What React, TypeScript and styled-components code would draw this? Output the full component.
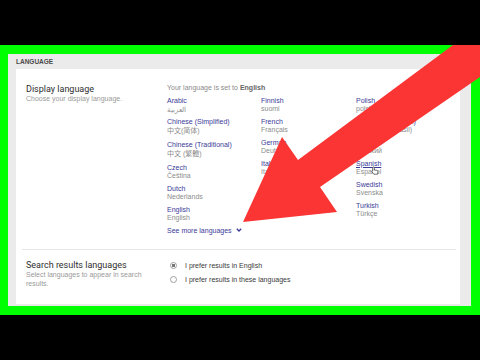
import React from "react";
import styled, { createGlobalStyle } from "styled-components";

const Global = createGlobalStyle`
  html, body { margin: 0; padding: 0; background: #000; }
  body { font-family: "Liberation Sans", Arial, "Noto Sans CJK SC", sans-serif; }
  * { box-sizing: border-box; }
`;

const Page = styled.div`
  position: relative;
  width: 480px;
  height: 360px;
  background: #000;
  overflow: hidden;
  display: flex;
  flex-direction: column;
`;

const Band = styled.div<{ $h: number }>`
  height: ${(p) => p.$h}px;
  flex: none;
  background: #000;
  position: relative;
  z-index: 2;
`;

const Frame = styled.div`
  height: 270px;
  flex: none;
  background: #00ff00;
  padding: 9px 9px 9px 8px;
`;

const Panel = styled.div`
  height: 100%;
  background: #ebebeb;
  padding: 0 11px 2px 8px;
  display: flex;
  flex-direction: column;
`;

const PanelHeader = styled.div`
  height: 15px;
  flex: none;
  display: flex;
  align-items: center;
  font-size: 6.5px;
  font-weight: 700;
  color: #4a4a4a;
  text-transform: uppercase;
`;

const Card = styled.div`
  flex: 1;
  background: #fff;
  display: flex;
  flex-direction: column;
`;

const Section = styled.div<{ $pt: number; $pb: number }>`
  display: grid;
  grid-template-columns: 141px 1fr;
  padding: ${(p) => p.$pt}px 0 ${(p) => p.$pb}px 10px;
`;

const Title = styled.div<{ $lh: number }>`
  font-family: Roboto, "Liberation Sans", sans-serif;
  font-size: 9px;
  line-height: ${(p) => p.$lh}px;
  color: #2e2e2e;
`;

const Desc = styled.div<{ $mt: number }>`
  font-size: 7px;
  line-height: 8.75px;
  color: #9a9a9a;
  max-width: 122px;
  margin-top: ${(p) => p.$mt}px;
`;

const Intro = styled.div`
  font-size: 7px;
  line-height: 10px;
  color: #8a8a8a;
  margin-bottom: 2.5px;
  b { color: #666; font-weight: 700; }
`;

const LangGrid = styled.div`
  display: grid;
  grid-template-columns: 94px 95px 1fr;
`;

const LangCol = styled.div`
  display: flex;
  flex-direction: column;
  gap: 3.5px;
`;

const LangItem = styled.div`
  position: relative;
  display: flex;
  flex-direction: column;
`;

const LangName = styled.span<{ $under?: boolean }>`
  font-size: 7px;
  line-height: 9px;
  color: #3a3a98;
  text-decoration: ${(p) => (p.$under ? "underline" : "none")};
  text-underline-offset: 1px;
`;

const Native = styled.span<{ $lh: number }>`
  font-size: 7px;
  line-height: ${(p) => p.$lh}px;
  color: #8c8c8c;
  white-space: nowrap;
`;

const MoreLink = styled.div`
  display: flex;
  align-items: center;
  gap: 4px;
  font-size: 7px;
  line-height: 9px;
  color: #3a3a98;
`;

const Divider = styled.div`
  height: 1px;
  background: #e6e6e6;
  margin: 0 4px 0 6px;
`;

const RadioList = styled.div`
  display: flex;
  flex-direction: column;
`;

const RadioRow = styled.div`
  height: 14px;
  display: flex;
  align-items: center;
  padding-left: 3px;
  gap: 8px;
  font-size: 7px;
  color: #3a3a3a;
`;

const Radio = styled.span<{ $on?: boolean }>`
  width: 7px;
  height: 7px;
  border-radius: 50%;
  border: 1px solid #a0a0a0;
  background: ${(p) => (p.$on ? "radial-gradient(circle, #777 0 1.6px, #fff 2px)" : "#fff")};
  flex: none;
`;

const Cursor = styled.svg`
  position: absolute;
  left: 15px;
  top: 7px;
`;

const Overlay = styled.svg`
  position: absolute;
  left: 0;
  top: 0;
  pointer-events: none;
  z-index: 1;
`;

type Lang = { name: string; native: string; lh?: number; under?: boolean; cursor?: boolean };

const cols: Lang[][] = [
  [
    { name: "Arabic", native: "العربية", lh: 9.2 },
    { name: "Chinese (Simplified)", native: "中文(简体)", lh: 9.8 },
    { name: "Chinese (Traditional)", native: "中文 (繁體)", lh: 10.5 },
    { name: "Czech", native: "Čeština" },
    { name: "Dutch", native: "Nederlands" },
    { name: "English", native: "English" },
  ],
  [
    { name: "Finnish", native: "suomi" },
    { name: "French", native: "Français" },
    { name: "German", native: "Deutsch" },
    { name: "Italian", native: "Italiano" },
  ],
  [
    { name: "Polish", native: "polski" },
    { name: "Portuguese (Brasil)", native: "Português (Brasil)" },
    { name: "Russian", native: "Русский" },
    { name: "Spanish", native: "Español", under: true, cursor: true },
    { name: "Swedish", native: "Svenska" },
    { name: "Turkish", native: "Türkçe" },
  ],
];

const Item = ({ l }: { l: Lang }) => (
  <LangItem>
    <LangName $under={l.under}>{l.name}</LangName>
    <Native $lh={l.lh ?? 8.5}>{l.native}</Native>
    {l.cursor && (
      <Cursor width="8" height="9" viewBox="0 0 8 9">
        <path
          d="M2.5 0.8 C3.2 0.8 3.3 1.3 3.3 1.8 L3.3 4 L5.5 4.3 C6.6 4.5 7 5 6.9 6 L6.6 8.2 L2.8 8.2 L0.8 5.6 C0.5 5.1 1 4.6 1.6 5 L1.7 5.1 L1.7 1.8 C1.7 1.2 1.9 0.8 2.5 0.8 Z"
          fill="#fff"
          stroke="#333"
          strokeWidth="0.7"
        />
      </Cursor>
    )}
  </LangItem>
);

export default function App() {
  return (
    <Page>
      <Global />
      <Band $h={45} />
      <Frame>
        <Panel>
          <PanelHeader>Language</PanelHeader>
          <Card>
            <Section $pt={14} $pb={14.75}>
              <div>
                <Title $lh={12}>Display language</Title>
                <Desc $mt={0}>Choose your display language.</Desc>
              </div>
              <div>
                <Intro>
                  Your language is set to <b>English</b>
                </Intro>
                <LangGrid>
                  {cols.map((c, i) => (
                    <LangCol key={i}>
                      {c.map((l) => (
                        <Item key={l.name} l={l} />
                      ))}
                      {i === 0 && (
                        <MoreLink>
                          See more languages
                          <svg width="6" height="4" viewBox="0 0 6 4">
                            <polyline points="0.8,0.8 3,3 5.2,0.8" fill="none" stroke="#3a3a98" strokeWidth="1.3" />
                          </svg>
                        </MoreLink>
                      )}
                    </LangCol>
                  ))}
                </LangGrid>
              </div>
            </Section>
            <Divider />
            <Section $pt={8} $pb={0}>
              <div>
                <Title $lh={14}>Search results languages</Title>
                <Desc $mt={-1.5}>Select languages to appear in search results.</Desc>
              </div>
              <RadioList>
                <RadioRow>
                  <Radio $on />I prefer results in English
                </RadioRow>
                <RadioRow>
                  <Radio />I prefer results in these languages
                </RadioRow>
              </RadioList>
            </Section>
          </Card>
        </Panel>
      </Frame>
      <Band $h={45} />
      <Overlay width="480" height="360" viewBox="0 0 480 360">
        <polygon
          points="453,45 480,45 480,77 320,187 337,212 243,222 282,137 298,160"
          fill="#fb3434"
        />
      </Overlay>
    </Page>
  );
}
